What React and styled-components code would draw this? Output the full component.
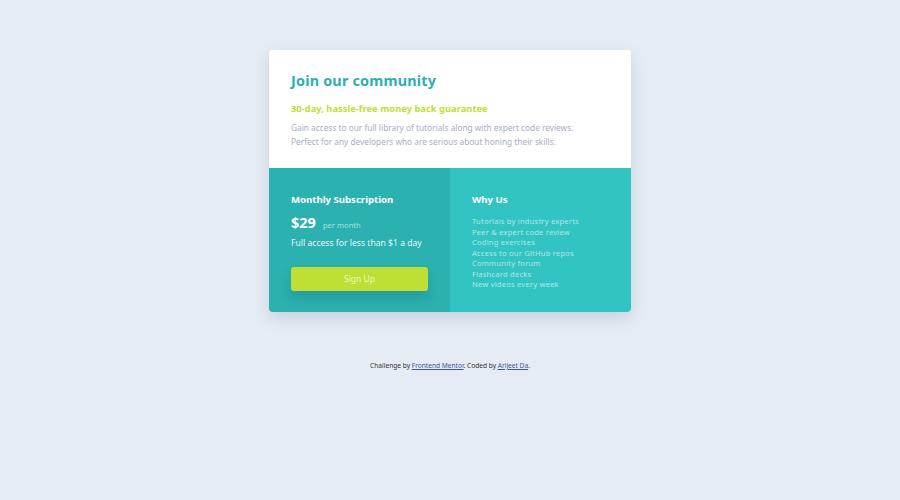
import React from 'react';
import styled, { createGlobalStyle } from 'styled-components';

const Global = createGlobalStyle`
  body {
    margin: 0;
    background: #e5ecf4;
    font-family: "Noto Sans", Lato, sans-serif;
  }
`;

const Page = styled.main`
  min-height: 500px;
  display: flex;
  flex-direction: column;
  align-items: center;
  padding-top: 50px;
  box-sizing: border-box;
`;

const Card = styled.section`
  width: 362px;
  border-radius: 4px;
  overflow: hidden;
  box-shadow: 0 6px 16px rgba(60, 90, 130, 0.18);
`;

const Top = styled.div`
  background: #fff;
  padding: 21px 22px 0;
  height: 118px;
  box-sizing: border-box;
`;

const Title = styled.h1`
  margin: 0 0 11px;
  font-size: 14.4px;
  line-height: 20px;
  font-weight: 700;
  color: #2bb0ae;
  letter-spacing: 0.2px;
`;

const Guarantee = styled.h2`
  margin: 0 0 6px;
  font-size: 9.4px;
  line-height: 13px;
  font-weight: 700;
  color: #bfdd34;
`;

const Text = styled.p`
  margin: 0;
  font-size: 8.3px;
  line-height: 13.5px;
  color: #a9aec1;
`;

const Bottom = styled.div`
  display: grid;
  grid-template-columns: 181px 181px;
  height: 144px;
`;

const Col = styled.div`
  background: ${p => p.$light ? '#32c4c2' : '#2bb1af'};
  padding: 25px 22px 0;
  color: #fff;
`;

const ColTitle = styled.h3`
  margin: 0 0 ${p => p.$gap || 5}px;
  font-size: 9.6px;
  line-height: 14px;
  font-weight: 700;
`;

const Price = styled.div`
  display: flex;
  align-items: baseline;
  gap: 7px;
  margin-bottom: 5px;
`;

const Amount = styled.span`
  font-size: 14.5px;
  font-weight: 700;
  line-height: 20px;
`;

const Per = styled.span`
  font-size: 7.6px;
  color: rgba(255, 255, 255, 0.6);
`;

const Access = styled.p`
  margin: 0 0 16px;
  font-size: 8.6px;
  line-height: 12px;
  color: rgba(255, 255, 255, 0.92);
`;

const Button = styled.button`
  width: 137px;
  height: 24px;
  border: 0;
  border-radius: 3px;
  background: #c0df34;
  color: rgba(255, 255, 255, 0.75);
  font-family: inherit;
  font-size: 8.5px;
  box-shadow: 0 8px 12px rgba(20, 80, 90, 0.22);
`;

const List = styled.ul`
  list-style: none;
  margin: 0;
  padding: 0;
  font-size: 7.6px;
  line-height: 10.5px;
  color: rgba(255, 255, 255, 0.62);
  letter-spacing: 0.2px;
`;

const Footer = styled.footer`
  margin-top: 49px;
  font-size: 6.6px;
  color: #333;
  a {
    color: #3e52a3;
  }
`;

const reasons = [
  'Tutorials by industry experts',
  'Peer & expert code review',
  'Coding exercises',
  'Access to our GitHub repos',
  'Community forum',
  'Flashcard decks',
  'New videos every week',
];

export default function App() {
  return (
    <>
      <Global />
      <Page>
        <Card>
          <Top>
            <Title>Join our community</Title>
            <Guarantee>30-day, hassle-free money back guarantee</Guarantee>
            <Text>
              Gain access to our full library of tutorials along with expert code reviews.
              <br />
              Perfect for any developers who are serious about honing their skills.
            </Text>
          </Top>
          <Bottom>
            <Col>
              <ColTitle>Monthly Subscription</ColTitle>
              <Price>
                <Amount>$29</Amount>
                <Per>per month</Per>
              </Price>
              <Access>Full access for less than $1 a day</Access>
              <Button>Sign Up</Button>
            </Col>
            <Col $light>
              <ColTitle $gap={9}>Why Us</ColTitle>
              <List>
                {reasons.map(r => <li key={r}>{r}</li>)}
              </List>
            </Col>
          </Bottom>
        </Card>
        <Footer>
          Challenge by <a href="#">Frontend Mentor</a>. Coded by <a href="#">Arijeet Da</a>.
        </Footer>
      </Page>
    </>
  );
}
